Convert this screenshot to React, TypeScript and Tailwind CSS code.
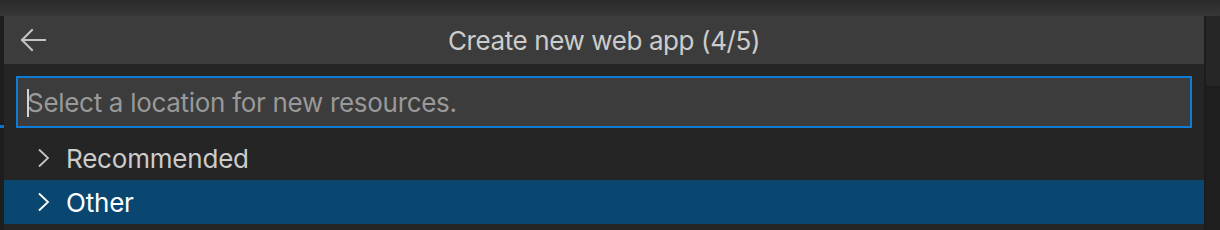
import React from 'react';

function ArrowLeft() {
  return (
    <svg width="26" height="24" viewBox="0 0 26 24" fill="none" stroke="#c5c5c5" strokeWidth="2" strokeLinecap="square">
      <path d="M2 12H25" />
      <path d="M12 2L2 12L12 22" strokeLinejoin="miter" />
    </svg>
  );
}

function Chevron({ color }: { color: string }) {
  return (
    <svg width="14" height="20" viewBox="0 0 14 20" fill="none" stroke={color} strokeWidth="1.8">
      <path d="M2 1.5L11 10L2 18.5" />
    </svg>
  );
}

const rows = [
  { label: 'Recommended', selected: false },
  { label: 'Other', selected: true },
];

export default function App() {
  return (
    <div
      className="w-[1220px] h-[230px] flex flex-col bg-[#1e1e1e] overflow-hidden"
      style={{ fontFamily: 'Inter, "Noto Sans", sans-serif' }}
    >
      <div className="h-4 shrink-0 bg-gradient-to-b from-[#2b2b2b] to-[#363636]" />
      <div className="flex flex-1">
        <div className="w-1 flex flex-col">
          <div className="h-[109px]" />
          <div className="h-[3px] bg-[#0e70c0]" />
        </div>

        <div className="w-[1200px] flex flex-col bg-[#252526]">
          <div className="h-12 shrink-0 flex items-center bg-[#3c3c3c] relative">
            <div className="pl-4 flex items-center">
              <ArrowLeft />
            </div>
            <div className="absolute inset-0 flex items-center justify-center text-[26px] text-[#cccccc] tracking-[-0.4px]">
              Create new web app (4/5)
            </div>
          </div>

          <div className="px-3 pt-3 pb-2">
            <div className="h-[52px] border-2 border-[#0e7cd4] bg-[#3c3c3c] flex items-center pl-[9px] relative">
              <span className="absolute left-[9px] top-[11px] w-[2px] h-[28px] bg-[#d4d4d4]" />
              <span className="text-[26px] text-[#999999] tracking-[-0.3px]">
                Select a location for new resources.
              </span>
            </div>
          </div>

          <div className="flex flex-col">
            {rows.map((r) => (
              <div
                key={r.label}
                className={
                  'h-11 flex items-center pl-[33px] ' +
                  (r.selected ? 'bg-[#094771] text-white' : 'text-[#cccccc]')
                }
              >
                <Chevron color={r.selected ? '#ffffff' : '#c5c5c5'} />
                <span className="ml-[15px] text-[26px] tracking-[-0.2px]">{r.label}</span>
              </div>
            ))}
          </div>
        </div>

        <div className="w-[2px] bg-[#1c1c1c]" />
        <div className="flex-1 flex flex-col">
          <div className="h-[70px] bg-[#262626]" />
          <div className="flex-1 bg-[#1e1e1e]" />
        </div>
      </div>
    </div>
  );
}
